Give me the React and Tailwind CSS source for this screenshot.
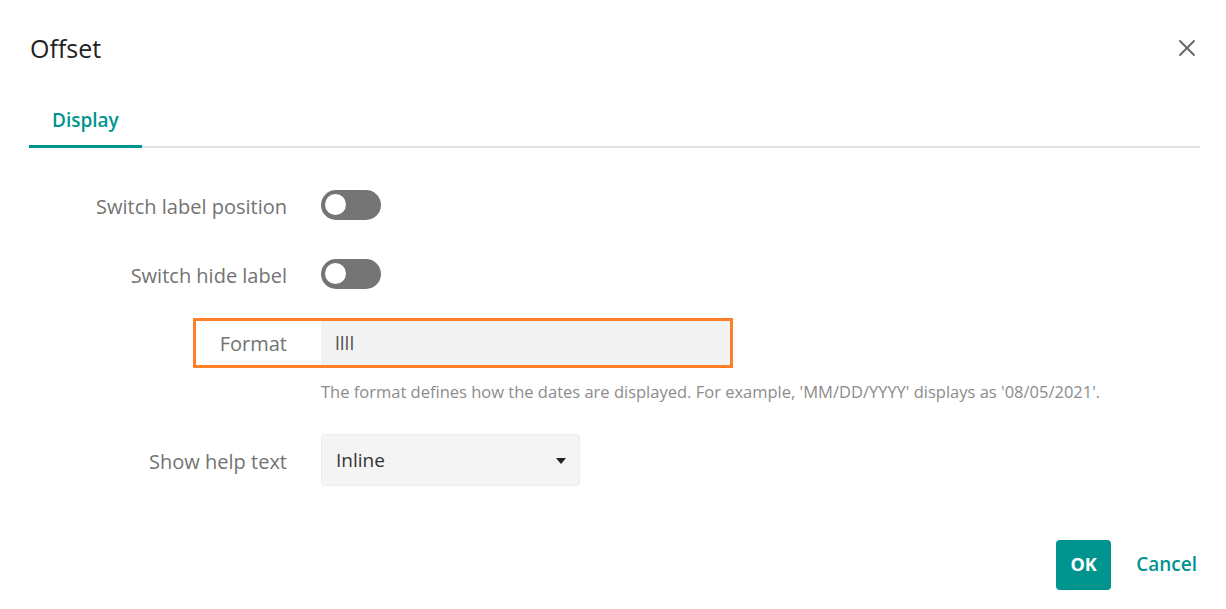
import { X } from 'lucide-react';

function Toggle() {
  return (
    <div className="flex h-[30px] w-[60px] items-center rounded-full bg-[#757575] px-[2px]">
      <div className="h-[25px] w-[25px] rounded-full border-2 border-[#757575] bg-white" />
    </div>
  );
}

function Row({ label, children, className = '' }) {
  return (
    <div className={`flex items-center ${className}`}>
      <div className="w-[292px] translate-y-[2px] pr-[34px] text-right text-[20px] leading-[30px] text-[#737373]">{label}</div>
      {children}
    </div>
  );
}

export default function App() {
  return (
    <div
      className="min-h-[609px] w-[1226px] bg-white px-[29px] pt-[30px] text-[#333]"
      style={{ fontFamily: '"Open Sans", "Noto Sans", sans-serif' }}
    >
      <div className="flex items-center justify-between">
        <h1 className="pl-[1px] text-[25px] leading-[36px] text-[#222]">Offset</h1>
        <X className="mr-[-4px] h-[28px] w-[28px] text-[#666]" strokeWidth={1.6} />
      </div>

      <div className="mt-[40px] mr-[-3px] flex border-b-2 border-[#e2e2e2]">
        <div className="-mb-[2px] border-b-[3px] border-[#00948f] px-[23px] pb-[10px] text-[19px] font-semibold text-[#00948f]">
          Display
        </div>
      </div>

      <div className="mt-[42px] flex flex-col">
        <Row label="Switch label position">
          <Toggle />
        </Row>
        <Row label="Switch hide label" className="mt-[39px]">
          <Toggle />
        </Row>

        <div className="mt-[29px] ml-[164px] flex h-[50px] w-[540px] items-stretch border-[3px] border-[#ff7f27]">
          <div className="flex w-[125px] items-center justify-end pr-[34px] pt-[3px] text-[20px] text-[#737373]">Format</div>
          <div className="flex flex-1 items-center bg-[#f3f3f3] pl-[14px] pt-[2px] text-[19px] text-[#555]">llll</div>
        </div>

        <div className="ml-[292px] mt-[12px] text-[16.5px] leading-[24px] text-[#8c8c8c]">
          The format defines how the dates are displayed. For example, 'MM/DD/YYYY' displays as '08/05/2021'.
        </div>

        <Row label="Show help text" className="mt-[30px]">
          <div className="flex h-[52px] w-[259px] items-center justify-between rounded-[4px] border border-[#ececec] bg-[#f4f4f4] pl-[14px] pr-[13px] pt-[2px] text-[19px] text-[#333]">
            <span>Inline</span>
            <svg width="10" height="6" viewBox="0 0 10 6">
              <path d="M0 0 L10 0 L5 6 Z" fill="#222" />
            </svg>
          </div>
        </Row>
      </div>

      <div className="mt-[54px] flex items-center justify-end gap-[25px]">
        <button className="h-[50px] w-[55px] rounded-[4px] bg-[#00948f] text-[18px] font-bold text-white">OK</button>
        <button className="text-[19px] font-semibold text-[#00948f]">Cancel</button>
      </div>
    </div>
  );
}
